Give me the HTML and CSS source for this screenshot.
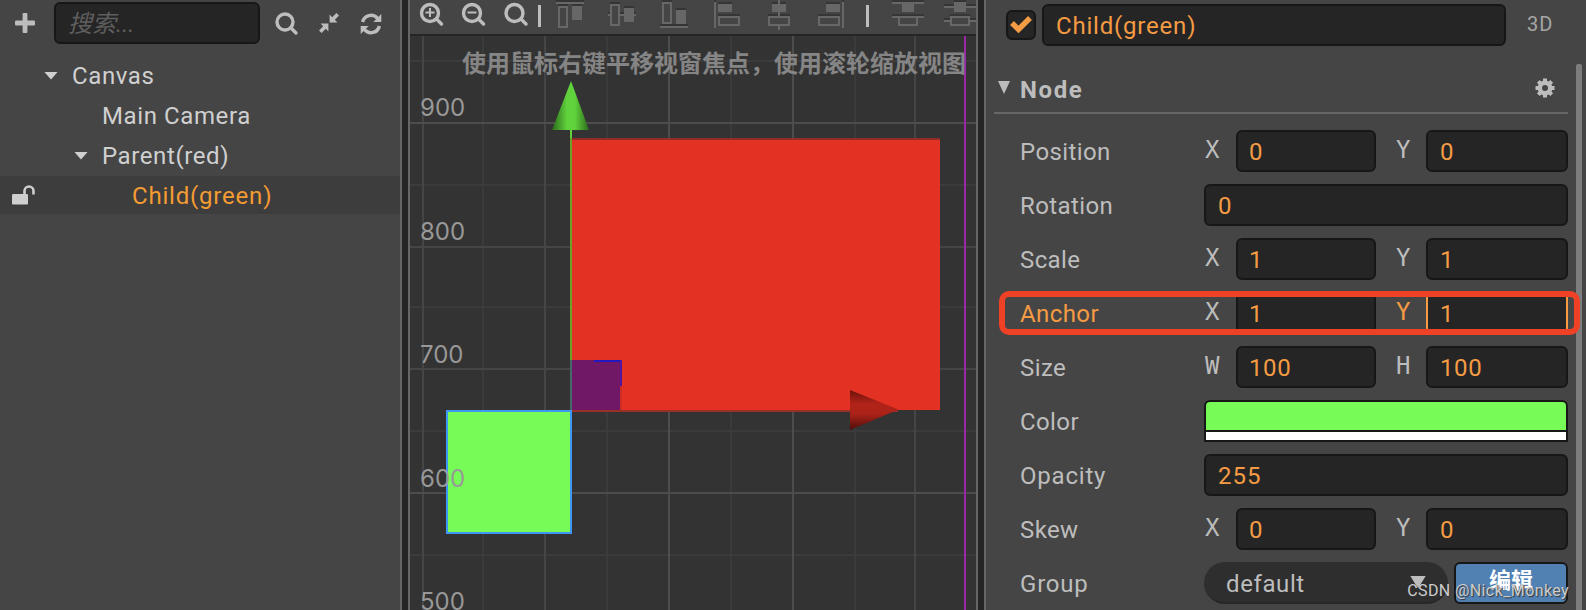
FILE: index.html
```
<!DOCTYPE html>
<html lang="zh">

<head>
    <meta charset="UTF-8">
    <meta name="viewport" content="width=device-width, initial-scale=1.0">
    <title>Cocos Creator</title>
    <link rel="stylesheet" href="styles.css">
</head>

<body>
    <div class="editor">
        <!-- 层级管理器 -->
        <div class="hierarchy">
            <div class="search-bar">
                <svg class="icon-plus" width="20" height="20" viewBox="0 0 20 20">
                    <path d="M7.600 1.200Q7.600 0 8.800 0h2.400q1.200 0 1.200 1.200v6.400h6.400q1.200 0 1.200 1.200v2.400q0 1.200-1.200 1.200h-6.400v6.400q0 1.200-1.200 1.200H8.800q-1.200 0-1.200-1.200v-6.400H1.200Q0 12.400 0 11.200V8.800q0-1.200 1.200-1.200h6.400z" />
                </svg>
                <input class="search" type="text" placeholder="搜索...">
                <svg class="icon-search" width="24" height="24" viewBox="0 0 24 24">
                    <circle cx="10" cy="10" r="8" />
                    <path d="M16 16l5 5" />
                </svg>
                <svg class="icon-collapse" width="20" height="20" viewBox="0 0 20 20">
                    <path d="M10.600 1.600v7.800h7.800l-2.600-2.600 4.200-4.200L17.400 0l-4.200 4.200zM9.400 18.400v-7.800H1.600l2.600 2.600L0 17.400 2.600 20l4.200-4.200z" />
                </svg>
                <svg class="icon-refresh" width="22" height="22" viewBox="0 0 22 22">
                    <path class="arc" d="M2.600 9A8.600 8.600 0 0 1 17.500 5.300M19.400 13A8.600 8.600 0 0 1 4.500 16.700" />
                    <path d="M21.300 1v8h-8zM.7 21v-8h8z" />
                </svg>
            </div>
            <div class="tree">
                <div class="tree-row level1"><i class="fold"></i><span>Canvas</span></div>
                <div class="tree-row level2"><span class="camera">Main Camera</span></div>
                <div class="tree-row level2"><i class="fold"></i><span>Parent(red)</span></div>
                <div class="tree-row level3 selected">
                    <svg class="icon-lock" width="23" height="20" viewBox="0 0 23 20">
                        <rect x="0" y="9" width="16" height="10.500" rx="1.200" />
                        <path d="M12.500 10V6a4.500 4.500 0 0 1 9 0v3.500" />
                    </svg>
                    <span>Child(green)</span>
                </div>
            </div>
        </div>

        <!-- 场景编辑器 -->
        <div class="scene">
            <div class="toolbar">
                <svg class="zoom" width="26" height="30" viewBox="0 0 26 30">
                    <circle cx="11" cy="13" r="8.500" />
                    <path d="M17.500 19l5 5" />
                    <path class="thin" d="M6.500 12.500h9M11 8v9" />
                </svg>
                <svg class="zoom" width="26" height="30" viewBox="0 0 26 30">
                    <circle cx="11" cy="13" r="8.500" />
                    <path d="M17.500 19l5 5" />
                    <path class="thin" d="M6.500 12.500h9" />
                </svg>
                <svg class="zoom" width="26" height="30" viewBox="0 0 26 30">
                    <circle cx="11.500" cy="13" r="8.500" />
                    <path d="M18 19l5 5" />
                </svg>
                <i class="split"></i>
                <svg class="align" width="32" height="34" viewBox="0 0 32 34">
                    <path class="shade" d="M2 0h28v2H2zM4 4h10v2H4zM18 4h10v2H18z" />
                    <path d="M2 2h28v2H2zM18 6h10v14H18z" />
                    <rect x="5" y="7" width="8" height="20" />
                </svg>
                <svg class="align" width="32" height="34" viewBox="0 0 32 34">
                    <path class="shade" d="M4 2h10v2H4zM18 6h10v2H18zM2 12h2v2H2zM14 12h4v2h-4zM28 12h2v2h-2z" />
                    <path d="M2 14h2v2H2zM14 14h4v2h-4zM28 14h2v2h-2zM18 8h10v14H18z" />
                    <rect x="5" y="5" width="8" height="20" />
                </svg>
                <svg class="align" width="32" height="34" viewBox="0 0 32 34">
                    <path class="shade" d="M4 0h10v2H4zM18 8h10v2H18zM2 24h28v2H2z" />
                    <path d="M2 26h28v2H2zM18 10h10v14H18z" />
                    <rect x="5" y="3" width="8" height="20" />
                </svg>
                <svg class="align" width="32" height="34" viewBox="0 0 32 34">
                    <path class="shade" d="M4 0h2v2H4zM8 2h14v2H8zM8 14h22v2H8z" />
                    <path d="M4 2h2v26H4zM8 4h14v8H8z" />
                    <rect x="9" y="17" width="20" height="8" />
                </svg>
                <svg class="align" width="32" height="34" viewBox="0 0 32 34">
                    <path class="shade" d="M10 2h14v2H10zM6 14h22v2H6z" />
                    <path d="M16 0h2v16h-2zM16 26h2v4h-2zM10 4h14v8H10z" />
                    <rect x="7" y="17" width="20" height="8" />
                </svg>
                <svg class="align" width="32" height="34" viewBox="0 0 32 34">
                    <path class="shade" d="M28 0h2v2h-2zM12 2h14v2H12zM4 14h22v2H4z" />
                    <path d="M28 2h2v26h-2zM12 4h14v8H12z" />
                    <rect x="5" y="17" width="20" height="8" />
                </svg>
                <i class="split second"></i>
                <svg class="align" width="32" height="34" viewBox="0 0 32 34">
                    <path class="shade" d="M0 0h32v2H0zM0 14h32v2H0z" />
                    <path d="M0 2h32v2H0zM10 4h12v8H10zM0 16h32v2H0z" />
                    <rect x="7" y="17" width="18" height="8" />
                </svg>
                <svg class="align" width="32" height="34" viewBox="0 0 32 34">
                    <path class="shade" d="M0 4h10v2H0zM22 4h10v2H22zM10 0h12v2H10zM6 14h20v2H6zM0 18h6v2H0zM26 18h6v2h-6z" />
                    <path d="M0 6h32v2H0zM10 2h12v10H10zM0 20h6v2H0zM26 20h6v2h-6z" />
                    <rect x="7" y="17" width="18" height="8" />
                </svg>
            </div>
            <div class="stage">
                <svg class="drawing" width="566" height="574" viewBox="410 36 566 574">
                    <defs>
                        <linearGradient id="coneY" x1="0" x2="1" y1="0" y2="0">
                            <stop offset="0" stop-color="#2c6a1c" />
                            <stop offset=".4" stop-color="#60d23c" />
                            <stop offset=".62" stop-color="#60d23c" />
                            <stop offset="1" stop-color="#2c6a1c" />
                        </linearGradient>
                        <linearGradient id="coneX" x1="0" x2="0" y1="0" y2="1">
                            <stop offset="0" stop-color="#6c120c" />
                            <stop offset=".35" stop-color="#b22318" />
                            <stop offset=".6" stop-color="#ac2218" />
                            <stop offset="1" stop-color="#4c0f0b" />
                        </linearGradient>
                    </defs>
                    <!-- 网格 -->
                    <path class="grid weak" d="M483 36v574M607 36v574M731 36v574M855 36v574M410 61h566M410 185h566M410 307h566M410 431h566M410 555h566" />
                    <path class="grid mid" d="M423 36v574M545 36v574M915 36v574M410 247h566M410 369h566" />
                    <path class="grid strong" d="M669 36v574M793 36v574M410 123h566M410 493h566" />
                    <!-- 父节点 -->
                    <rect x="572" y="138" width="368" height="2" fill="#8f2f28" />
                    <rect x="572" y="140" width="368" height="270" fill="#e33223" />
                    <rect x="572" y="410" width="326" height="2" fill="#98302a" />
                    <rect x="572" y="360" width="48" height="50" fill="#701865" />
                    <rect x="594" y="360" width="28" height="2" fill="#2318c0" />
                    <rect x="620" y="360" width="2" height="26" fill="#5018a0" />
                    <rect x="620" y="386" width="2" height="24" fill="#cd2d28" />
                    <!-- 子节点 -->
                    <rect x="447" y="411" width="124" height="122" fill="#77fb57" stroke="#3e97f2" stroke-width="2" />
                    <!-- 坐标轴 -->
                    <rect x="570" y="130" width="2" height="230" fill="#6aa22b" />
                    <rect x="570" y="130" width="2" height="8" fill="#5fd13c" />
                    <rect x="570" y="360" width="2" height="50" fill="#456868" />
                    <path d="M571 81L589 130H552z" fill="url(#coneY)" />
                    <path d="M850 390L898.500 409.500L850 430z" fill="url(#coneX)" />
                    <rect x="964" y="36" width="2" height="574" fill="#9b26a6" />
                </svg>
                <div class="hint">使用鼠标右键平移视窗焦点，使用滚轮缩放视图</div>
                <div class="ruler">
                    <span>900</span>
                    <span>800</span>
                    <span>700</span>
                    <span>600</span>
                    <span>500</span>
                </div>
            </div>
        </div>

        <!-- 属性检查器 -->
        <div class="inspector">
            <div class="node-head">
                <div class="check">
                    <svg width="22" height="18" viewBox="0 0 22 18">
                        <path d="M2 8l6.500 6.500L20 3" />
                    </svg>
                </div>
                <div class="field name">Child(green)</div>
                <span class="mode">3D</span>
            </div>
            <div class="section">
                <i class="arrow"></i>
                <span class="section-title">Node</span>
                <svg class="icon-gear" width="20" height="20" viewBox="-10 -10 20 20">
                    <circle r="5.200" />
                    <path d="M0-9.500V-6M0 6v3.500M-9.500 0H-6M6 0h3.500M-6.700-6.700l2.500 2.500M6.700-6.700l-2.500 2.500M-6.700 6.700l2.500-2.500M6.700 6.700l-2.500-2.500" />
                </svg>
            </div>
            <div class="props">
                <div class="prop">
                    <span class="label">Position</span>
                    <span class="axis">X</span><div class="field">0</div>
                    <span class="axis right">Y</span><div class="field last">0</div>
                </div>
                <div class="prop">
                    <span class="label">Rotation</span>
                    <div class="field full">0</div>
                </div>
                <div class="prop">
                    <span class="label">Scale</span>
                    <span class="axis">X</span><div class="field">1</div>
                    <span class="axis right">Y</span><div class="field last">1</div>
                </div>
                <div class="prop active">
                    <span class="label">Anchor</span>
                    <span class="axis">X</span><div class="field">1</div>
                    <span class="axis right focus">Y</span><div class="field last focus">1</div>
                    <div class="mark"></div>
                </div>
                <div class="prop">
                    <span class="label">Size</span>
                    <span class="axis">W</span><div class="field">100</div>
                    <span class="axis right">H</span><div class="field last">100</div>
                </div>
                <div class="prop">
                    <span class="label">Color</span>
                    <div class="color"><div class="alpha"></div></div>
                </div>
                <div class="prop">
                    <span class="label wide">Opacity</span>
                    <div class="field full">255</div>
                </div>
                <div class="prop">
                    <span class="label">Skew</span>
                    <span class="axis">X</span><div class="field">0</div>
                    <span class="axis right">Y</span><div class="field last">0</div>
                </div>
                <div class="prop">
                    <span class="label wide">Group</span>
                    <div class="select"><span>default</span><i class="arrow"></i></div>
                    <div class="btn">编辑</div>
                </div>
            </div>
            <div class="scrollbar"></div>
            <div class="watermark">CSDN @Nick_Monkey</div>
        </div>
    </div>
</body>

</html>
```
FILE: styles.css
```
* {
    box-sizing: border-box;
}

body {
    margin: 0;
    background-color: #252525;
    font-family: Roboto, "Noto Sans CJK SC", sans-serif;
    font-size: 24px;
    letter-spacing: 0.6px;
    color: #bdbdbd;
}

svg {
    display: block;
    flex: none;
    fill: #bdbdbd;
}

.editor {
    display: flex;
    gap: 6px;
    width: 1586px;
    height: 610px;
    overflow: hidden;
}

/* 层级管理器 */
.hierarchy {
    width: 402px;
    background-color: #454545;
    border-right: 2px solid #666;
}

.search-bar {
    display: flex;
    align-items: flex-start;
    height: 56px;
    padding: 2px 0 0 15px;
}

.search {
    width: 206px;
    height: 42px;
    margin: 0 15px 0 19px;
    padding: 2px 12px 0;
    background-color: #252525;
    border: 2px solid #171717;
    border-radius: 6px;
    outline: none;
    font: italic 24px Roboto, "Noto Sans CJK SC", sans-serif;
}

.search::placeholder {
    color: #5e5e5e;
}

.icon-plus,
.icon-collapse,
.icon-refresh {
    margin-top: 11px;
}

.icon-search {
    margin-top: 10px;
}

.icon-collapse {
    margin-left: 20px;
}

.icon-refresh {
    margin-left: 21px;
}

.icon-search,
.icon-refresh .arc,
.icon-lock path,
.zoom {
    fill: none;
    stroke: #bdbdbd;
    stroke-width: 3.4;
    stroke-linecap: round;
}

.icon-refresh .arc {
    stroke-linecap: butt;
}

.tree-row {
    display: flex;
    align-items: center;
    height: 38px;
    margin-bottom: 2px;
    color: #d0d0d0;
}

.tree-row span {
    padding-top: 2px;
}

.level1 {
    padding-left: 44px;
}

.level2 {
    padding-left: 74px;
}

.tree-row .camera {
    padding-left: 28px;
}

.level3 {
    padding-left: 12px;
    letter-spacing: 0.8px;
}

.selected {
    background-color: #3d3d3d;
    color: #f49b33;
}

.fold {
    width: 14px;
    height: 8px;
    margin: 1px 14px 0 0;
    background-color: #d0d0d0;
    clip-path: polygon(0 0, 100% 0, 50% 100%);
}

.icon-lock {
    margin-right: 97px;
    fill: #cfcfcf;
}

.icon-lock path {
    stroke: #cfcfcf;
    stroke-width: 2.6;
    stroke-linecap: butt;
}

/* 场景编辑器 */
.scene {
    width: 570px;
    border: solid #666;
    border-width: 0 2px;
    background-color: #333;
}

.toolbar {
    display: flex;
    height: 36px;
    padding-left: 9px;
    background-color: #454545;
    border-bottom: 2px solid #252525;
    overflow: hidden;
}

.zoom {
    margin-right: 16px;
}

.zoom .thin {
    stroke-width: 2;
    stroke-linecap: butt;
}

.split {
    flex: none;
    width: 3px;
    height: 22px;
    margin: 5px 13px 0 -7px;
    background-color: #bdbdbd;
}

.split.second {
    margin: 5px 23px 0 0;
}

.align {
    margin-right: 20px;
    fill: #676767;
}

.align .shade {
    fill: #353535;
}

.align rect {
    fill: none;
    stroke: #676767;
    stroke-width: 2;
}

.stage {
    position: relative;
    height: 574px;
    overflow: hidden;
}

.drawing {
    position: absolute;
    top: 0;
    left: 0;
}

.grid {
    fill: none;
    stroke-width: 2;
}

.grid.weak {
    stroke: #3b3b3b;
}

.grid.mid {
    stroke: #454545;
}

.grid.strong {
    stroke: #4d4d4d;
}

.hint {
    position: absolute;
    top: 10px;
    left: 52px;
    line-height: 36px;
    font-weight: bold;
    letter-spacing: 0;
    white-space: nowrap;
    color: #858585;
}

.ruler {
    position: absolute;
    top: 54px;
    left: 10px;
    font-family: Inter, sans-serif;
    letter-spacing: 0;
    color: #989898;
}

.ruler span {
    display: block;
    height: 123.5px;
    line-height: 36px;
}

/* 属性检查器 */
.inspector {
    position: relative;
    width: 602px;
    background-color: #454545;
    border-left: 2px solid #666;
}

.node-head {
    display: flex;
    align-items: flex-start;
    padding: 4px 0 0 20px;
}

.check {
    width: 30px;
    height: 30px;
    margin: 6px 6px 0 0;
    padding: 3px 2px;
    background-color: #252525;
    border: 2px solid #171717;
    border-radius: 6px;
}

.check svg {
    fill: none;
    stroke: #f49b44;
    stroke-width: 5.4;
}

.field {
    width: 140px;
    height: 42px;
    padding: 0 0 0 11px;
    background-color: #252525;
    border: 2px solid #171717;
    border-radius: 6px;
    line-height: 40px;
    color: #f49b44;
}

.field.name {
    width: 464px;
    padding-left: 12px;
    letter-spacing: 0.8px;
}

.field.last {
    width: 142px;
    padding-left: 12px;
}

.field.full {
    width: 364px;
    padding-left: 12px;
    letter-spacing: 1px;
}

.mode {
    margin: 8px 0 0 21px;
    font-size: 20px;
    letter-spacing: 1px;
    color: #a5a5a5;
}

.section {
    display: flex;
    align-items: center;
    width: 574px;
    height: 50px;
    margin: 18px 0 16px 8px;
    padding: 0 13px 0 4px;
    border-bottom: 2px solid #666;
}

.arrow {
    width: 12px;
    height: 13px;
    background-color: #bdbdbd;
    clip-path: polygon(0 0, 100% 0, 50% 100%);
}

.section .arrow {
    margin-bottom: 1px;
}

.section-title {
    flex: 1;
    padding: 3px 0 0 10px;
    font-weight: bold;
    letter-spacing: 1.6px;
}

.icon-gear circle {
    fill: none;
    stroke: #bdbdbd;
    stroke-width: 4.4;
}

.icon-gear path {
    stroke: #bdbdbd;
    stroke-width: 4;
}

.props {
    display: flex;
    flex-direction: column;
    gap: 12px;
    padding-left: 34px;
}

.prop {
    position: relative;
    display: flex;
    height: 42px;
}

.label {
    width: 184px;
    line-height: 44px;
    letter-spacing: 0.4px;
}

.label.wide {
    letter-spacing: 0.8px;
}

.axis {
    width: 32px;
    padding-left: 1px;
    font-family: "DejaVu Sans Mono", monospace;
    line-height: 41px;
    letter-spacing: 0;
}

.axis.right {
    width: 50px;
    padding-left: 20px;
}

.active .label,
.axis.focus {
    color: #f49b44;
}

.field.focus {
    border-color: #f49b44;
}

/* 红色圆角框 */
.mark {
    position: absolute;
    top: -1px;
    left: -21px;
    width: 581px;
    height: 44px;
    border: 6px solid #ee4126;
    border-radius: 10px;
    z-index: 1;
}

.color {
    display: flex;
    flex-direction: column;
    justify-content: flex-end;
    width: 364px;
    background-color: #77fb57;
    border: 2px solid #171717;
    border-radius: 6px 6px 0 0;
}

.alpha {
    height: 10px;
    background-color: #fff;
    border-top: 2px solid #171717;
}

.select {
    display: flex;
    align-items: center;
    justify-content: space-between;
    width: 244px;
    margin-right: 6px;
    padding: 0 22px;
    background-color: #2e2e2e;
    border-bottom: 2px solid #272727;
    border-radius: 21px;
}

.select span {
    padding-top: 3px;
}

.select .arrow {
    width: 16px;
}

.btn {
    width: 114px;
    background-color: #5180b3;
    border: 2px solid #171717;
    border-radius: 6px;
    line-height: 34px;
    font-size: 22px;
    font-weight: bold;
    letter-spacing: 0;
    text-align: center;
    color: #fff;
}

.scrollbar {
    position: absolute;
    top: 64px;
    right: 4px;
    width: 6px;
    height: 546px;
    background-color: #7d7d7d;
    border-radius: 2px 2px 0 0;
}

.watermark {
    position: absolute;
    right: 17px;
    bottom: 9px;
    font-size: 16px;
    line-height: 20px;
    letter-spacing: 0.4px;
    color: #ccc;
    text-shadow: 1px 1px 1px #333;
}
```
